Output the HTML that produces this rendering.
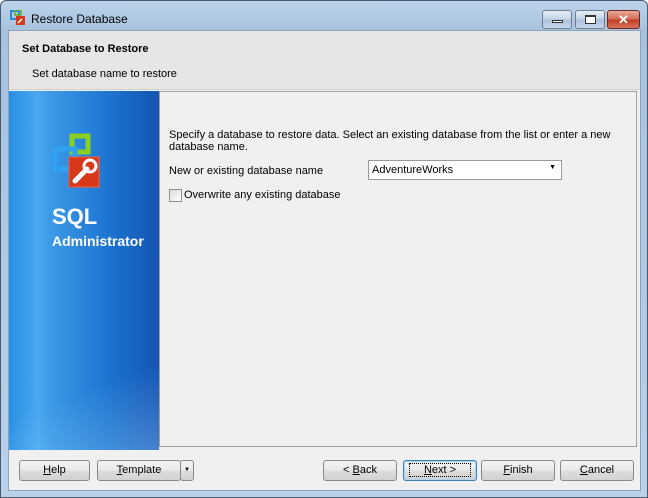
<!DOCTYPE html>
<html><head><style>
*{margin:0;padding:0;box-sizing:border-box}
body{width:648px;height:498px;overflow:hidden;font-family:"Liberation Sans",Tahoma,sans-serif;font-size:11px;color:#000;background:#fff}
.win{position:absolute;left:0;top:0;width:648px;height:498px;border:1px solid #4a5a6e;border-radius:6px 6px 0 0;background:linear-gradient(#bcd3ea,#a7c2de 30px,#b9d1e9 100%)}
.client{position:absolute;left:7px;top:29px;width:633px;height:461px;background:#f0f0f0;border:1px solid #8fa3b8}
.title{position:absolute;left:30px;top:11px;font-size:12px;color:#000}
.tb{position:absolute;top:9px;height:19px;border:1px solid #6d7e93;border-radius:3px;background:linear-gradient(#e6eef7,#c3d3e6 50%,#aabfd8 51%,#c7d8ec)}
.hdr{position:absolute;left:0;top:0;width:631px;height:59px;background:#e6e6e6;border-bottom:1px solid #d0d0d0}
.btn{position:absolute;top:429px;height:21px;border:1px solid #8a8a8a;border-radius:3px;background:linear-gradient(#f4f4f4,#ebebeb 45%,#dcdcdc 55%,#d2d2d2);text-align:center;line-height:19px;font-size:11px}
</style></head><body>
<div class="win">
 <svg style="position:absolute;left:9px;top:9px" width="16" height="16"><rect x="1" y="1" width="8" height="8" fill="none" stroke="#2a8ad8" stroke-width="2"/><rect x="5" y="0" width="6" height="5" fill="none" stroke="#6ab020" stroke-width="1.5"/><rect x="6" y="6" width="9" height="9" fill="#d83a1a"/><path d="M8 13l4-4" stroke="#fff" stroke-width="1.5"/></svg>
 <div class="title">Restore Database</div>
 <div class="tb" style="left:541px;width:30px"><div style="position:absolute;left:9px;top:9px;width:11px;height:3px;border:1px solid #333;background:#fff"></div></div>
 <div class="tb" style="left:574px;width:30px"><div style="position:absolute;left:9px;top:4px;width:11px;height:9px;border:1px solid #333;border-top-width:2px;background:#fff"></div></div>
 <div class="tb" style="left:606px;width:33px;border-color:#6b2a20;background:linear-gradient(#e9a99a,#d56a52 50%,#c33a1f 51%,#d8745c)"><div style="position:absolute;left:0;width:31px;top:0;text-align:center;color:#fff;font-weight:bold;font-size:13px;line-height:17px">✕</div></div>
 <div class="client">
  <div class="hdr">
   <div style="position:absolute;left:13px;top:12px;font-weight:bold;font-size:11px">Set Database to Restore</div>
   <div style="position:absolute;left:23px;top:37px">Set database name to restore</div>
  </div>
  <div style="position:absolute;left:0;top:60px;width:150px;height:359px;background:linear-gradient(90deg,#2a8ee0 0,#4aa6ee 30px,#3c9be8 40px,#1d74d0 100px,#1354b4 150px)">
   <div style="position:absolute;left:0;top:0;width:30px;height:359px;background:linear-gradient(90deg,#2890e6,#4aaaf0);opacity:.6"></div>
   <div style="position:absolute;left:0;bottom:0;width:150px;height:90px;background:linear-gradient(160deg,rgba(255,255,255,0) 40%,rgba(160,210,255,.35))"></div>
   <svg style="position:absolute;left:38px;top:40px" width="60" height="64">
    <rect x="25" y="5" width="16" height="16" fill="none" stroke="#8ad020" stroke-width="5"/>
    <rect x="8" y="18" width="20" height="20" fill="none" stroke="#30a0f0" stroke-width="5"/>
    <rect x="22" y="26" width="30" height="30" fill="#d8381a" stroke="#f06040" stroke-width="1"/>
    <path d="M28 50l12-12" stroke="#fff" stroke-width="5" stroke-linecap="round"/>
    <circle cx="43" cy="35" r="6" fill="none" stroke="#fff" stroke-width="3"/>
   </svg>
   <div style="position:absolute;left:43px;top:113px;color:#fff;font-weight:bold;font-size:22px">SQL</div>
   <div style="position:absolute;left:43px;top:142px;color:#fff;font-weight:bold;font-size:14px">Administrator</div>
  </div>
  <div style="position:absolute;left:150px;top:60px;width:478px;height:356px;border:1px solid #a0a0a0;background:#f0f0f0">
   <div style="position:absolute;left:9px;top:37px;width:460px;line-height:12px">Specify a database to restore data. Select an existing database from the list or enter a new database name.</div>
   <div style="position:absolute;left:9px;top:73px">New or existing database name</div>
   <div style="position:absolute;left:208px;top:68px;width:194px;height:20px;border:1px solid #9a9a9a;background:#fff;padding:3px 0 0 3px">AdventureWorks<span style="position:absolute;right:5px;top:3px;font-size:7px">▼</span></div>
   <div style="position:absolute;left:9px;top:97px;width:13px;height:13px;border:1px solid #8e8f8f;background:linear-gradient(135deg,#dcdcdc,#fff)"></div>
   <div style="position:absolute;left:24px;top:97px">Overwrite any existing database</div>
  </div>
  <div class="btn" style="left:10px;width:71px"><u>H</u>elp</div>
  <div class="btn" style="left:88px;width:84px"><u>T</u>emplate</div>
  <div class="btn" style="left:171px;width:14px;font-size:6px">▼</div>
  <div class="btn" style="left:314px;width:74px">&lt; <u>B</u>ack</div>
  <div class="btn" style="left:394px;width:74px;border-color:#3c7fb1;box-shadow:inset 0 0 0 1px #a6d8f4"><span style="outline:1px dotted #000;padding:0 14px"><u>N</u>ext &gt;</span></div>
  <div class="btn" style="left:472px;width:74px"><u>F</u>inish</div>
  <div class="btn" style="left:551px;width:74px"><u>C</u>ancel</div>
 </div>
</div>
</body></html>
